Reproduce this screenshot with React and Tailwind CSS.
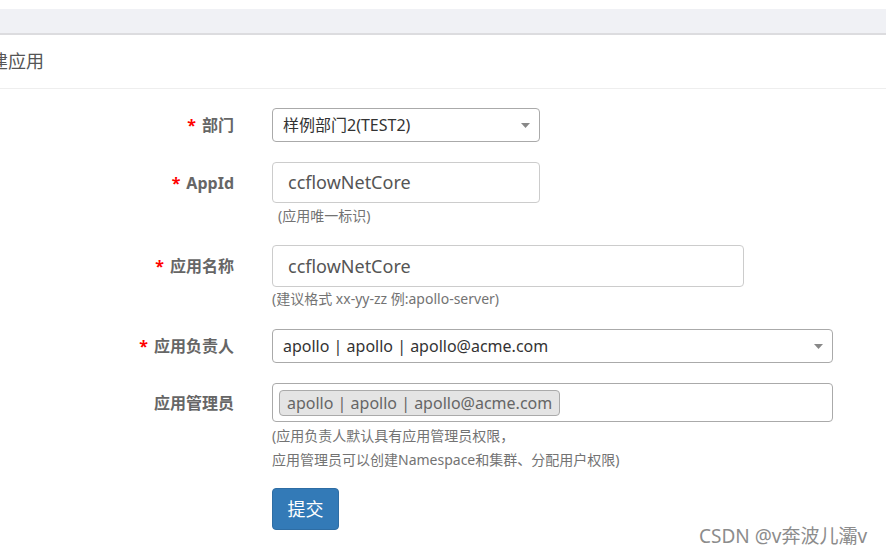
import React from "react";

const FONT = { fontFamily: '"Noto Sans", "Noto Sans CJK SC", sans-serif' };

const Caret = () => (
  <svg width="9" height="5" viewBox="0 0 9 5" className="shrink-0">
    <path d="M0 0h9L4.5 5z" fill="#888" />
  </svg>
);

const Label = ({ required, children, h }) => (
  <div className={`w-[234px] shrink-0 flex items-center justify-end font-bold text-[16px] text-[#666] ${h}`}>
    {required && <span className="text-[#f00] mr-[6px]">*</span>}
    {children}
  </div>
);

export default function App() {
  return (
    <div className="relative w-[886px] h-[554px] overflow-hidden bg-white" style={FONT}>
      {/* top band */}
      <div className="h-[9px] bg-white" />
      <div className="h-[26px] bg-[#f0f1f5] border-b-2 border-[#dcdcdf]" />

      {/* panel heading */}
      <div className="h-[54px] flex items-center border-b border-[#eeeeee]">
        <h3 className="ml-[-28px] text-[18px] text-[#555] font-normal whitespace-nowrap">创建应用</h3>
      </div>

      {/* form */}
      <div className="pt-[19px]">
        {/* 部门 */}
        <div className="flex gap-[38px] mb-[20px]">
          <Label required h="h-[34px]">部门</Label>
          <div className="w-[268px] h-[34px] border border-[#aaa] rounded-[4px] flex items-center justify-between pl-[10px] pr-[9px] text-[16px] text-[#333]">
            <span>样例部门2(TEST2)</span>
            <Caret />
          </div>
        </div>

        {/* AppId */}
        <div className="flex gap-[38px] mb-[20px]">
          <Label required h="h-[41px]">AppId</Label>
          <div className="flex flex-col">
            <div className="w-[268px] h-[41px] border border-[#ccc] rounded-[4px] flex items-center pl-[15px] text-[18px] text-[#555]">
              ccflowNetCore
            </div>
            <div className="mt-[4px] pl-[6px] text-[14px] leading-[18px] text-[#737373]">(应用唯一标识)</div>
          </div>
        </div>

        {/* 应用名称 */}
        <div className="flex gap-[38px] mb-[21px]">
          <Label required h="h-[42px]">应用名称</Label>
          <div className="flex flex-col">
            <div className="w-[472px] h-[42px] border border-[#ccc] rounded-[4px] flex items-center pl-[15px] text-[18px] text-[#555]">
              ccflowNetCore
            </div>
            <div className="mt-[3px] text-[14px] leading-[18px] text-[#737373]">(建议格式 xx-yy-zz 例:apollo-server)</div>
          </div>
        </div>

        {/* 应用负责人 */}
        <div className="flex gap-[38px] mb-[20px]">
          <Label required h="h-[34px]">应用负责人</Label>
          <div className="w-[561px] h-[34px] border border-[#aaa] rounded-[4px] flex items-center justify-between pl-[10px] pr-[9px] text-[16px] text-[#333]">
            <span>apollo | apollo | apollo@acme.com</span>
            <Caret />
          </div>
        </div>

        {/* 应用管理员 */}
        <div className="flex gap-[38px]">
          <Label h="h-[39px]">应用管理员</Label>
          <div className="flex flex-col">
            <div className="w-[561px] h-[39px] border border-[#aaa] rounded-[4px] flex items-center pl-[6px]">
              <span className="h-[26px] px-[7px] flex items-center bg-[#e4e4e4] border border-[#aaa] rounded-[4px] text-[16px] text-[#666]">
                apollo | apollo | apollo@acme.com
              </span>
            </div>
            <div className="mt-[2px] text-[14px] leading-[24px] text-[#737373]">
              <div>(应用负责人默认具有应用管理员权限，</div>
              <div>应用管理员可以创建Namespace和集群、分配用户权限)</div>
            </div>
            <button className="mt-[16px] w-[67px] h-[42px] bg-[#337ab7] border border-[#2e6da4] rounded-[4px] text-white text-[18px]">
              提交
            </button>
          </div>
        </div>
      </div>

      {/* watermark */}
      <div className="absolute left-[699px] top-[522px] text-[19px] text-[#8c8c8c] whitespace-nowrap">
        CSDN @v奔波儿灞v
      </div>
    </div>
  );
}
